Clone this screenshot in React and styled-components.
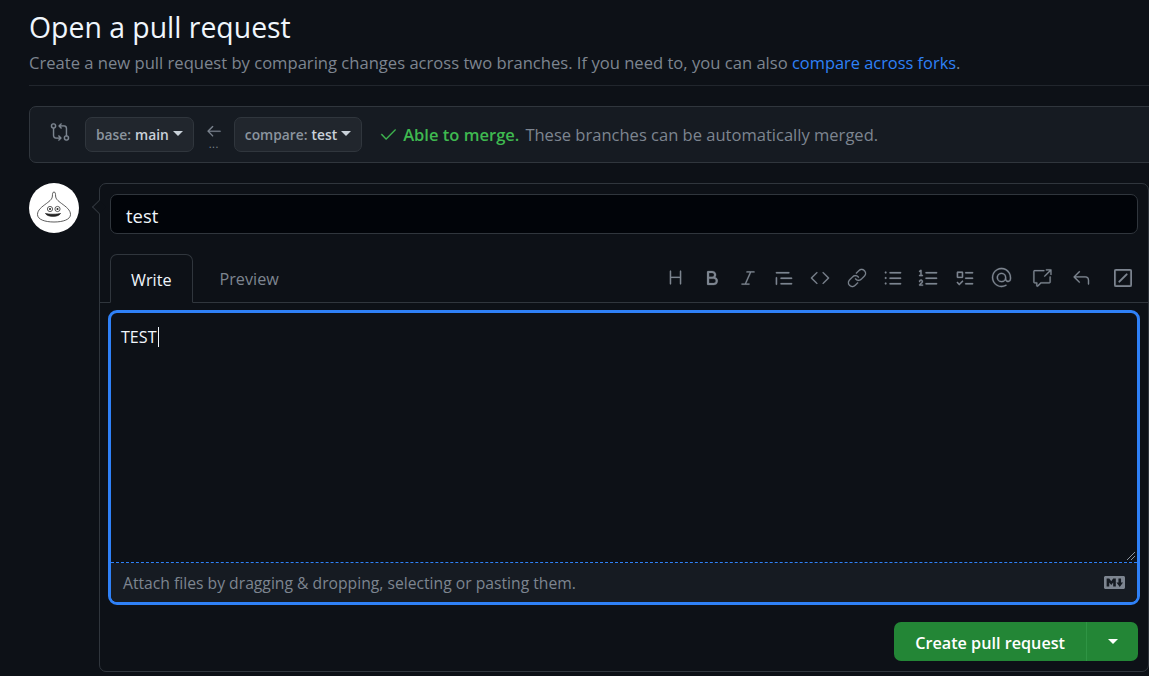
import React from "react";
import styled, { createGlobalStyle } from "styled-components";
import {
  GoGitCompare,
  GoArrowLeft,
  GoCheck,
  GoHeading,
  GoBold,
  GoItalic,
  GoQuote,
  GoCode,
  GoLink,
  GoListUnordered,
  GoListOrdered,
  GoTasklist,
  GoMention,
  GoCrossReference,
  GoReply,
} from "react-icons/go";

const colors = {
  bg: "#0d1117",
  subtle: "#161b22",
  border: "#30363d",
  muted: "#7d8590",
  text: "#c9d1d9",
  white: "#f0f6fc",
  blue: "#2f81f7",
  green: "#238636",
  check: "#3fb950",
};

const GlobalStyle = createGlobalStyle`
  html, body {
    margin: 0;
    background: ${colors.bg};
    overflow: hidden;
  }
  body {
    font-family: "Open Sans", "Noto Sans", "Liberation Sans", sans-serif;
    color: ${colors.text};
  }
`;

const SlashIcon = ({ size }) => (
  <svg width={size} height={size} viewBox="0 0 16 16" fill="currentColor">
    <path d="M1.75 0h12.5C15.22 0 16 .78 16 1.75v12.5A1.75 1.75 0 0 1 14.25 16H1.75A1.75 1.75 0 0 1 0 14.25V1.75C0 .78.78 0 1.75 0ZM1.5 1.75v12.5c0 .14.11.25.25.25h12.5a.25.25 0 0 0 .25-.25V1.75a.25.25 0 0 0-.25-.25H1.75a.25.25 0 0 0-.25.25Zm9.22 2.47a.75.75 0 0 1 1.06 1.06l-6.5 6.5a.75.75 0 0 1-1.06-1.06Z" />
  </svg>
);

const MarkdownIcon = () => (
  <svg width="21" height="21" viewBox="0 0 16 16" fill="currentColor">
    <path d="M14.85 3c.63 0 1.15.52 1.14 1.15v7.7c0 .63-.51 1.15-1.15 1.15H1.15C.52 13 0 12.48 0 11.84V4.15C0 3.52.52 3 1.15 3ZM9 11V5H7L5.5 7 4 5H2v6h2V8l1.5 1.92L7 8v3Zm2.99.5L14.5 8H13V5h-2v3H9.5Z" />
  </svg>
);

const Slime = () => (
  <svg width="50" height="50" viewBox="0 0 50 50">
    <circle cx="25" cy="25" r="25" fill="#fff" />
    <path
      d="M25 9c-1.500 0-1.500 2-1.600 4-.2 3-2 4.500-6 7.500-4.500 3.300-8.900 6.500-8.900 11 0 5 7.400 7.500 16.500 7.500s16.500-2.500 16.500-7.500c0-4.500-4.400-7.700-8.900-11-4-3-5.800-4.500-6-7.500-.1-2-.1-4-1.600-4Z"
      fill="none"
      stroke="#333"
      strokeWidth="0.8"
    />
    <circle cx="21" cy="26" r="2.600" fill="none" stroke="#333" strokeWidth="0.8" />
    <circle cx="28.500" cy="26" r="2.600" fill="none" stroke="#333" strokeWidth="0.8" />
    <circle cx="21" cy="26" r="1" fill="#222" />
    <circle cx="28.500" cy="26" r="1" fill="#222" />
    <path d="M16.500 30.500c2 3.800 13 3.800 15 0-3 1-12 1-15 0Z" fill="#222" stroke="#222" strokeWidth="0.8" />
  </svg>
);

const Page = styled.div`
  width: 1149px;
  height: 676px;
  box-sizing: border-box;
  padding: 9px 0 0 29px;
  overflow: hidden;
`;

const Header = styled.header`
  height: 77px;
  box-sizing: border-box;
  border-bottom: 1px solid #21262d;
`;

const Title = styled.h1`
  margin: 0;
  font-size: 28.4px;
  line-height: 37px;
  font-weight: 400;
  color: ${colors.white};
`;

const Subtitle = styled.p`
  margin: 6px 0 0;
  font-size: 16.6px;
  line-height: 22px;
  color: ${colors.muted};
  a {
    color: #2f81f7;
    text-decoration: none;
    font-size: 16.4px;
  }
`;

const CompareBar = styled.div`
  display: flex;
  align-items: center;
  width: 1140px;
  height: 57px;
  box-sizing: border-box;
  margin-top: 20px;
  padding-left: 20px;
  background: ${colors.subtle};
  border: 1px solid ${colors.border};
  border-radius: 7px;
  color: ${colors.muted};
`;

const BarIcon = styled.span`
  display: flex;
  font-size: 20px;
  margin: 0 15px 6px 0;
  svg {
    stroke: currentColor;
    stroke-width: 0.25;
  }
`;

const BranchButton = styled.button`
  display: flex;
  align-items: center;
  height: 35px;
  box-sizing: border-box;
  padding: 0 10px;
  background: #21262d;
  border: 1px solid ${colors.border};
  border-radius: 7px;
  color: #8b949e;
  font: 600 13.8px "Open Sans", sans-serif;
  white-space: nowrap;
  b {
    color: ${colors.text};
    font-weight: 600;
    margin-left: 4px;
  }
`;

const Caret = styled.i`
  display: inline-block;
  width: 0;
  height: 0;
  margin: 0 0 ${(p) => p.$lift || 0}px ${(p) => p.$gap || 4}px;
  border-top: 5px solid ${(p) => p.$color || colors.text};
  border-left: 5px solid transparent;
  border-right: 5px solid transparent;
`;

const ArrowBox = styled.div`
  display: flex;
  flex-direction: column;
  align-items: center;
  width: 40px;
  font-size: 18px;
  line-height: 1;
  svg {
    stroke: currentColor;
    stroke-width: 0.3;
  }
  span {
    font-size: 11px;
    line-height: 8px;
    letter-spacing: 0.5px;
  }
`;

const MergeStatus = styled.div`
  display: flex;
  align-items: center;
  margin-left: 17px;
  font-size: 16.55px;
  white-space: nowrap;
  svg {
    color: ${colors.check};
    margin-right: 5px;
    stroke: currentColor;
    stroke-width: 0.3;
  }
  strong {
    color: ${colors.check};
    font-weight: 600;
    margin-right: 6px;
  }
`;

const Discussion = styled.div`
  display: flex;
  margin-top: 20px;
`;

const Avatar = styled.div`
  width: 50px;
  height: 50px;
  flex: none;
  margin-right: 20px;
`;

const FormBox = styled.div`
  position: relative;
  width: 1050px;
  height: 489px;
  box-sizing: border-box;
  border: 1px solid ${colors.border};
  border-radius: 7px;
  padding-top: 10px;
  &::before {
    content: "";
    position: absolute;
    left: -6px;
    top: 18px;
    width: 9px;
    height: 9px;
    background: ${colors.bg};
    border-left: 1px solid ${colors.border};
    border-bottom: 1px solid ${colors.border};
    transform: rotate(45deg);
  }
`;

const TitleInput = styled.div`
  height: 40px;
  box-sizing: border-box;
  margin: 0 10px;
  padding: 2px 15px 0;
  display: flex;
  align-items: center;
  background: #010409;
  border: 1px solid ${colors.border};
  border-radius: 7px;
  font-size: 18.4px;
  color: ${colors.white};
`;

const TabRow = styled.div`
  display: flex;
  align-items: flex-end;
  height: 49px;
  margin-top: 19px;
  padding-left: 10px;
  border-bottom: 1px solid ${colors.border};
`;

const Tab = styled.div`
  height: 49px;
  box-sizing: border-box;
  margin-bottom: ${(p) => (p.$active ? -1 : 0)}px;
  padding: 3px ${(p) => (p.$active ? 20 : 26)}px 0;
  display: flex;
  align-items: center;
  font-size: 16.2px;
  color: ${(p) => (p.$active ? colors.white : colors.muted)};
  border: 1px solid ${(p) => (p.$active ? colors.border : "transparent")};
  border-bottom-color: ${(p) => (p.$active ? colors.bg : "transparent")};
  background: ${(p) => (p.$active ? colors.bg : "transparent")};
  border-radius: 7px 7px 0 0;
`;

const Toolbar = styled.div`
  display: flex;
  align-items: center;
  margin-left: auto;
  height: 49px;
  padding-right: 7px;
  color: ${colors.muted};
`;

const ToolIcon = styled.span`
  display: flex;
  justify-content: center;
  width: 36.2px;
  margin-left: ${(p) => p.$offset || 0}px;
  svg {
    stroke: currentColor;
    stroke-width: 0.25;
  }
`;

const Editor = styled.div`
  display: flex;
  flex-direction: column;
  height: 295px;
  box-sizing: border-box;
  margin: 7px 8px 0;
  border: 3px solid ${colors.blue};
  border-radius: 9px;
  overflow: hidden;
`;

const TextArea = styled.div`
  position: relative;
  flex: 1;
  padding: 12px 10px;
  font-size: 16.1px;
  line-height: 24px;
  color: ${colors.white};
  border-bottom: 1px dashed ${colors.blue};
`;

const Cursor = styled.span`
  display: inline-block;
  width: 1px;
  height: 20px;
  margin-left: 1px;
  vertical-align: -4px;
  background: ${colors.white};
`;

const Grip = styled.svg`
  position: absolute;
  right: 1px;
  bottom: 1px;
`;

const AttachBar = styled.div`
  display: flex;
  align-items: center;
  justify-content: space-between;
  height: 39px;
  padding: 0 12px;
  background: ${colors.subtle};
  font-size: 15.7px;
  color: ${colors.muted};
`;

const Actions = styled.div`
  display: flex;
  justify-content: flex-end;
  margin: 17px 10px 0 0;
`;

const SubmitGroup = styled.div`
  display: flex;
  height: 39px;
  background: ${colors.green};
  border-radius: 7px;
  color: #fff;
  font-size: 16.2px;
  font-weight: 600;
`;

const SubmitLabel = styled.div`
  display: flex;
  align-items: center;
  padding: 2px 21px 0;
  border-right: 1px solid #2f9444;
`;

const SubmitMenu = styled.div`
  display: flex;
  align-items: center;
  justify-content: center;
  width: 51px;
`;

const tools = [
  { Icon: GoHeading, name: "heading", size: 21 },
  { Icon: GoBold, name: "bold", size: 20 },
  { Icon: GoItalic, name: "italic", size: 20 },
  { Icon: GoQuote, name: "quote", size: 22 },
  { Icon: GoCode, name: "code", size: 20 },
  { Icon: GoLink, name: "link", size: 20 },
  { Icon: GoListUnordered, name: "bullets", size: 22 },
  { Icon: GoListOrdered, name: "numbers", size: 22 },
  { Icon: GoTasklist, name: "tasks", size: 22 },
  { Icon: GoMention, name: "mention", size: 21 },
  { Icon: GoCrossReference, name: "reference", size: 20, offset: 4 },
  { Icon: GoReply, name: "reply", size: 20, offset: 3 },
  { Icon: SlashIcon, name: "slash", size: 18, offset: 6 },
];

export default function App() {
  return (
    <>
      <GlobalStyle />
      <Page>
        <Header>
          <Title>Open a pull request</Title>
          <Subtitle>
            Create a new pull request by comparing changes across two branches. If you need to, you
            can also <a href="#forks">compare across forks</a>.
          </Subtitle>
        </Header>

        <CompareBar>
          <BarIcon>
            <GoGitCompare />
          </BarIcon>
          <BranchButton>
            base:<b>main</b>
            <Caret $lift={2} />
          </BranchButton>
          <ArrowBox>
            <GoArrowLeft />
            <span>...</span>
          </ArrowBox>
          <BranchButton>
            compare:<b>test</b>
            <Caret $lift={2} />
          </BranchButton>
          <MergeStatus>
            <GoCheck size={19} />
            <strong>Able to merge.</strong> These branches can be automatically merged.
          </MergeStatus>
        </CompareBar>

        <Discussion>
          <Avatar>
            <Slime />
          </Avatar>
          <FormBox>
            <TitleInput>test</TitleInput>
            <TabRow>
              <Tab $active>Write</Tab>
              <Tab>Preview</Tab>
              <Toolbar>
                {tools.map(({ Icon, name, size, offset }) => (
                  <ToolIcon key={name} $offset={offset}>
                    <Icon size={size} />
                  </ToolIcon>
                ))}
              </Toolbar>
            </TabRow>
            <Editor>
              <TextArea>
                TEST
                <Cursor />
                <Grip width="10" height="10" viewBox="0 0 10 10" stroke="#8b949e">
                  <path d="M1 9 9 1M5 9l4-4" />
                </Grip>
              </TextArea>
              <AttachBar>
                Attach files by dragging &amp; dropping, selecting or pasting them.
                <MarkdownIcon />
              </AttachBar>
            </Editor>
            <Actions>
              <SubmitGroup>
                <SubmitLabel>Create pull request</SubmitLabel>
                <SubmitMenu>
                  <Caret $color="#fff" $gap={1} />
                </SubmitMenu>
              </SubmitGroup>
            </Actions>
          </FormBox>
        </Discussion>
      </Page>
    </>
  );
}
